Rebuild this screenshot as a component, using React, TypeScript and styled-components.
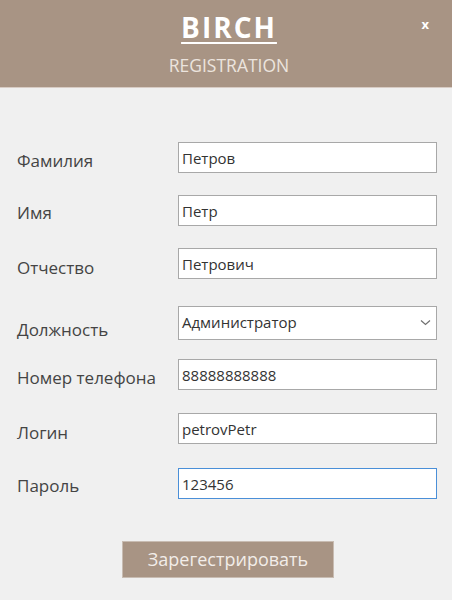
import React from "react";
import styled, { createGlobalStyle } from "styled-components";

const Global = createGlobalStyle`
  html, body { margin: 0; padding: 0; background: #f0f0f0; }
  body { font-family: "Open Sans", "Segoe UI", sans-serif; }
  * { box-sizing: border-box; }
`;

const Window = styled.div`
  width: 452px;
  height: 600px;
  background: #f0f0f0;
  display: flex;
  flex-direction: column;
`;

const Header = styled.header`
  position: relative;
  height: 88px;
  background: #a89484;
  border-bottom: 1px solid #d8ccc4;
  display: flex;
  flex-direction: column;
  align-items: center;
  padding: 10px 0 0 6px;
`;

const Title = styled.h1`
  margin: 0;
  font-family: "Open Sans", sans-serif;
  font-weight: 700;
  font-size: 28px;
  line-height: 34px;
  letter-spacing: 2px;
  color: #ffffff;
  text-decoration: underline;
  text-decoration-thickness: 2px;
  text-underline-offset: 4px;
`;

const Subtitle = styled.div`
  margin-top: 10px;
  font-family: "Open Sans", sans-serif;
  font-weight: 400;
  font-size: 17.5px;
  line-height: 22px;
  color: #ece4de;
`;

const Close = styled.button`
  position: absolute;
  top: 16px;
  right: 23px;
  border: 0;
  background: none;
  padding: 0;
  color: #ffffff;
  font-family: "Open Sans", sans-serif;
  font-weight: 700;
  font-size: 13px;
  line-height: 16px;
  cursor: pointer;
`;

const Form = styled.form`
  display: flex;
  flex-direction: column;
  padding: 0 15px 0 17px;
`;

const Row = styled.div<{ $top: number }>`
  display: flex;
  align-items: flex-start;
  margin-top: ${(p) => p.$top}px;
`;

const Label = styled.label<{ $offset: number }>`
  width: 161px;
  flex: none;
  padding-top: ${(p) => p.$offset}px;
  font-family: "Open Sans", sans-serif;
  font-size: 17px;
  line-height: 20px;
  color: #444444;
  white-space: nowrap;
`;

const Input = styled.input<{ $focused?: boolean }>`
  width: 259px;
  height: 31px;
  border: 1px solid ${(p) => (p.$focused ? "#4a8fd8" : "#a8a8a8")};
  background: #ffffff;
  padding: 0 3px;
  font-family: "Open Sans", sans-serif;
  font-size: 15px;
  color: #333333;
  outline: none;
`;

const SelectBox = styled.div`
  width: 259px;
  height: 34px;
  border: 1px solid #a8a8a8;
  background: #ffffff;
  display: flex;
  align-items: center;
  justify-content: space-between;
  padding: 0 5px 2px 3px;
  font-family: "Open Sans", sans-serif;
  font-size: 15px;
  color: #333333;
`;

const Chevron = styled.svg`
  width: 11px;
  height: 7px;
  flex: none;
`;

const Submit = styled.button`
  margin: 42px 0 0 105px;
  align-self: flex-start;
  width: 212px;
  height: 37px;
  border: 1px solid #c8bcb2;
  background: #a89484;
  color: #f2ede9;
  font-family: "Open Sans", sans-serif;
  font-size: 18px;
  padding: 0 0 2px;
  cursor: pointer;
`;

type Field = { label: string; value: string; top: number; offset: number; focused?: boolean; select?: boolean };

const fields: Field[] = [
  { label: "Фамилия", value: "Петров", top: 54, offset: 9 },
  { label: "Имя", value: "Петр", top: 22, offset: 8 },
  { label: "Отчество", value: "Петрович", top: 22, offset: 10 },
  { label: "Должность", value: "Администратор", top: 27, offset: 14, select: true },
  { label: "Номер телефона", value: "88888888888", top: 19, offset: 9 },
  { label: "Логин", value: "petrovPetr", top: 23, offset: 10 },
  { label: "Пароль", value: "123456", top: 24, offset: 8, focused: true },
];

export default function App() {
  return (
    <Window>
      <Global />
      <Header>
        <Title>BIRCH</Title>
        <Subtitle>REGISTRATION</Subtitle>
        <Close type="button">x</Close>
      </Header>
      <Form onSubmit={(e) => e.preventDefault()}>
        {fields.map((f) => (
          <Row key={f.label} $top={f.top}>
            <Label $offset={f.offset}>{f.label}</Label>
            {f.select ? (
              <SelectBox role="combobox">
                <span>{f.value}</span>
                <Chevron viewBox="0 0 11 7">
                  <path d="M1 1.5 L5.5 5.5 L10 1.5" fill="none" stroke="#707070" strokeWidth="1.2" />
                </Chevron>
              </SelectBox>
            ) : (
              <Input defaultValue={f.value} $focused={f.focused} />
            )}
          </Row>
        ))}
        <Submit type="submit">Зарегестрировать</Submit>
      </Form>
    </Window>
  );
}
